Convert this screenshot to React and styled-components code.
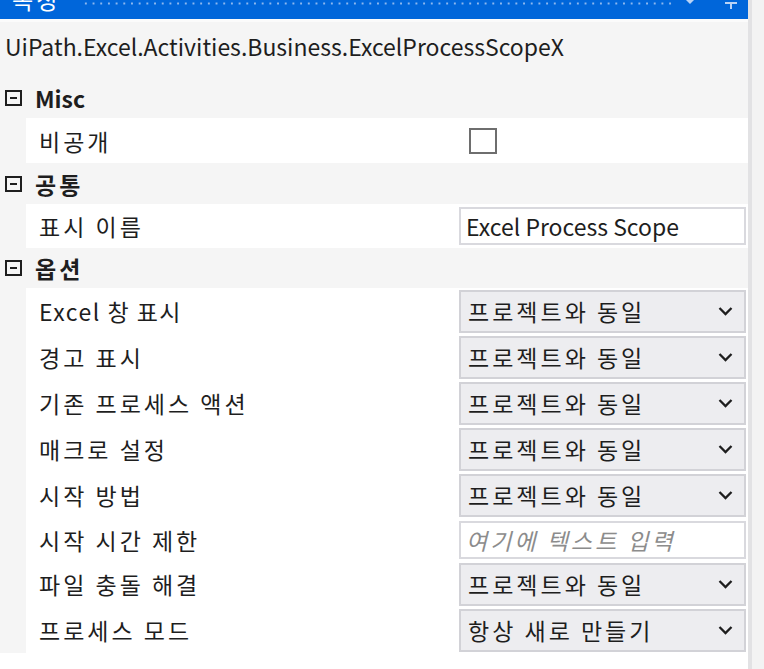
import React from "react";
import styled, { createGlobalStyle } from "styled-components";

const GlobalStyle = createGlobalStyle`
  html, body {
    margin: 0;
    padding: 0;
    background: #f3f3f3;
  }
  body {
    font-family: "Noto Sans CJK KR", "Noto Sans", sans-serif;
    font-size: 23px;
    color: #1e1e1e;
  }
`;

const Window = styled.div`
  display: flex;
  height: 669px;
  overflow: hidden;
`;

const Panel = styled.div`
  width: 748px;
  display: flex;
  flex-direction: column;
  background: #ffffff;
`;

const Splitter = styled.div`
  width: 4px;
  background: #e2e2e4;
`;

const Rest = styled.div`
  flex: 1;
  background: #f3f3f3;
`;

const TitleBar = styled.div`
  height: 19px;
  background: #0066da;
  display: flex;
  align-items: flex-start;
  overflow: hidden;
  padding: 0 10px 0 12px;
  gap: 8px;
`;

const TitleText = styled.div`
  color: #ffffff;
  line-height: 22px;
  margin-top: -12px;
  letter-spacing: 3px;
`;

const Dots = styled.div`
  flex: 1;
  height: 5px;
  margin: 1px 4px 0 14px;
  background-image: radial-gradient(circle, #8fb8ee 0.9px, transparent 1.3px);
  background-size: 7.7px 5px;
`;

const TitleIcons = styled.div`
  display: flex;
  align-items: flex-start;
  gap: 30px;
`;

const TitleEdge = styled.div`
  height: 3px;
  background: #fbfbfb;
`;

const Description = styled.div`
  height: 48px;
  padding: 0 0 8px 5px;
  background: #f5f5f5;
  display: flex;
  align-items: center;
`;

const Grid = styled.div`
  display: flex;
  flex-direction: column;
  background: #f5f5f5;
`;

const CategoryRow = styled.div`
  height: ${({ $h }) => $h || 40}px;
  display: flex;
  align-items: center;
  gap: 13px;
  padding-left: 5px;
  font-weight: 700;
  letter-spacing: ${({ $ls }) => $ls || 0}px;
`;

const Collapse = styled.span`
  width: 13px;
  height: 12px;
  border: 2px solid #1e1e1e;
  display: flex;
  align-items: center;
  justify-content: center;
  &::after {
    content: "";
    width: 7px;
    height: 2px;
    background: #1e1e1e;
  }
`;

const PropRow = styled.div`
  height: ${({ $h }) => $h || 45}px;
  margin-left: 26px;
  background: #ffffff;
  display: grid;
  grid-template-columns: 433px 1fr;
  align-items: center;
  padding-right: 2px;
`;

const Label = styled.div`
  padding-left: 13px;
  letter-spacing: ${({ $ls }) => $ls || 0}px;
  white-space: nowrap;
`;

const Value = styled.div`
  display: flex;
  align-items: center;
`;

const CheckBox = styled.span`
  width: 24px;
  height: 22px;
  margin-left: 10px;
  border: 2px solid #6e6e6e;
  background: #ffffff;
`;

const TextBox = styled.div`
  flex: 1;
  height: 34px;
  border: 2px solid #d9d9de;
  background: #ffffff;
  display: flex;
  align-items: center;
  padding-left: 5px;
  white-space: nowrap;
  color: ${({ $placeholder }) => ($placeholder ? "#8c8c8c" : "#1e1e1e")};
  font-style: ${({ $placeholder }) => ($placeholder ? "italic" : "normal")};
  letter-spacing: ${({ $placeholder }) => ($placeholder ? 3 : 0)}px;
`;

const Select = styled.div`
  flex: 1;
  height: 39px;
  border: 2px solid #d2d2d7;
  background: #ededf0;
  display: flex;
  align-items: center;
  justify-content: space-between;
  padding: 0 11px 0 7px;
  letter-spacing: 3px;
  white-space: nowrap;
`;

const Filler = styled.div`
  flex: 1;
  background: #ffffff;
`;

const Chevron = () => (
  <svg width="15" height="10" viewBox="0 0 15 10">
    <polyline points="1.5,2 7.5,8 13.5,2" fill="none" stroke="#1e1e1e" strokeWidth="2.3" />
  </svg>
);

const MenuArrow = () => (
  <svg width="8" height="5" viewBox="0 0 8 5">
    <polygon points="0,0 8,0 4,4" fill="#b9d3f5" />
  </svg>
);

const Pin = () => (
  <svg width="14" height="9" viewBox="0 0 14 9">
    <line x1="1" y1="3" x2="13" y2="3" stroke="#b9d3f5" strokeWidth="2" />
    <line x1="7" y1="3" x2="7" y2="9" stroke="#b9d3f5" strokeWidth="2" />
  </svg>
);

const options = [
  { label: "Excel 창 표시", ls: 1.5, value: "프로젝트와 동일" },
  { label: "경고 표시", value: "프로젝트와 동일" },
  { label: "기존 프로세스 액션", value: "프로젝트와 동일" },
  { label: "매크로 설정", value: "프로젝트와 동일" },
  { label: "시작 방법", value: "프로젝트와 동일" },
  { label: "시작 시간 제한", placeholder: "여기에 텍스트 입력" },
  { label: "파일 충돌 해결", value: "프로젝트와 동일" },
  { label: "프로세스 모드", value: "항상 새로 만들기" },
];

const Category = ({ name, h, ls }) => (
  <CategoryRow $h={h} $ls={ls}>
    <Collapse />
    {name}
  </CategoryRow>
);

export default function App() {
  return (
    <Window>
      <GlobalStyle />
      <Panel>
        <TitleBar>
          <TitleText>속성</TitleText>
          <Dots />
          <TitleIcons>
            <MenuArrow />
            <Pin />
          </TitleIcons>
        </TitleBar>
        <TitleEdge />
        <Description>UiPath.Excel.Activities.Business.ExcelProcessScopeX</Description>
        <Grid>
          <Category name="Misc" />
          <PropRow>
            <Label $ls={3}>비공개</Label>
            <Value>
              <CheckBox />
            </Value>
          </PropRow>
          <Category name="공통" h={41} ls={3} />
          <PropRow $h={44}>
            <Label $ls={3}>표시 이름</Label>
            <Value>
              <TextBox>Excel Process Scope</TextBox>
            </Value>
          </PropRow>
          <Category name="옵션" ls={3} />
          {options.map((o) => (
            <PropRow key={o.label} $h={o.placeholder ? 43 : 46}>
              <Label $ls={o.ls ?? 3}>{o.label}</Label>
              <Value>
                {o.placeholder ? (
                  <TextBox $placeholder>{o.placeholder}</TextBox>
                ) : (
                  <Select>
                    {o.value}
                    <Chevron />
                  </Select>
                )}
              </Value>
            </PropRow>
          ))}
        </Grid>
        <Filler />
      </Panel>
      <Splitter />
      <Rest />
    </Window>
  );
}
